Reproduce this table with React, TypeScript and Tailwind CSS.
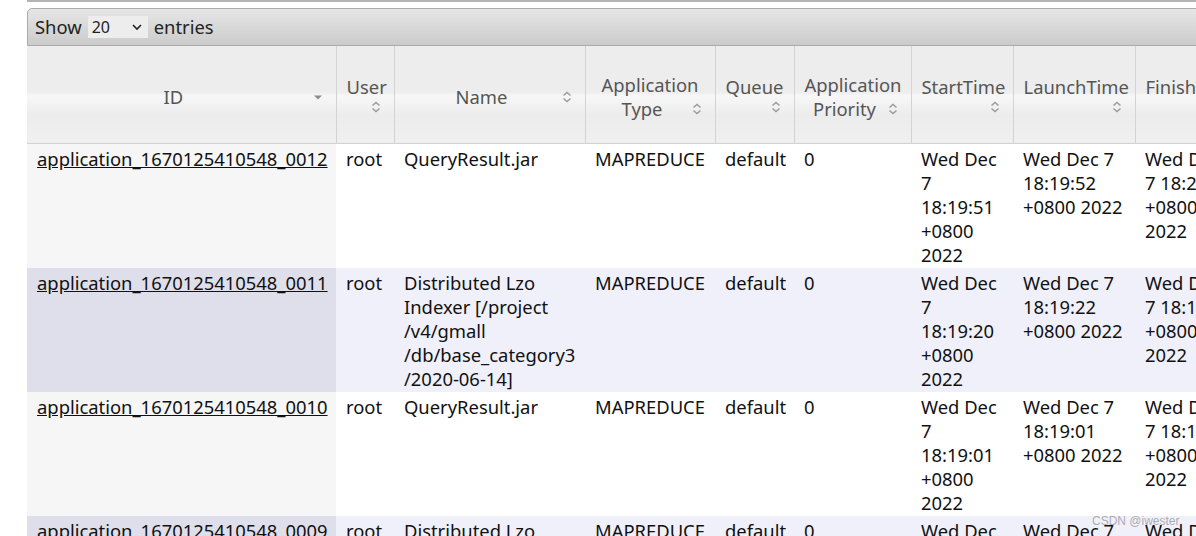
import type { ReactNode } from 'react';

type Col = { key: string; label: string[]; width: number; icon: 'tri' | 'chev'; mode: 'inline' | 'below' | 'wrap' };

const COLS: Col[] = [
  { key: 'id', label: ['ID'], width: 309, icon: 'tri', mode: 'inline' },
  { key: 'user', label: ['User'], width: 58, icon: 'chev', mode: 'below' },
  { key: 'name', label: ['Name'], width: 191, icon: 'chev', mode: 'inline' },
  { key: 'type', label: ['Application', 'Type'], width: 130, icon: 'chev', mode: 'wrap' },
  { key: 'queue', label: ['Queue'], width: 79, icon: 'chev', mode: 'below' },
  { key: 'prio', label: ['Application', 'Priority'], width: 117, icon: 'chev', mode: 'wrap' },
  { key: 'start', label: ['StartTime'], width: 102, icon: 'chev', mode: 'below' },
  { key: 'launch', label: ['LaunchTime'], width: 122, icon: 'chev', mode: 'below' },
  { key: 'finish', label: ['FinishTime'], width: 112, icon: 'chev', mode: 'below' },
];

type Row = {
  id: string;
  name: string[];
  start: string[];
  launch: string[];
  finish: string[];
};

const ROWS: Row[] = [
  {
    id: 'application_1670125410548_0012',
    name: ['QueryResult.jar'],
    start: ['Wed Dec', '7', '18:19:51', '+0800', '2022'],
    launch: ['Wed Dec 7', '18:19:52', '+0800 2022'],
    finish: ['Wed Dec', '7 18:20:03', '+0800', '2022'],
  },
  {
    id: 'application_1670125410548_0011',
    name: ['Distributed Lzo', 'Indexer [/project', '/v4/gmall', '/db/base_category3', '/2020-06-14]'],
    start: ['Wed Dec', '7', '18:19:20', '+0800', '2022'],
    launch: ['Wed Dec 7', '18:19:22', '+0800 2022'],
    finish: ['Wed Dec', '7 18:19:38', '+0800', '2022'],
  },
  {
    id: 'application_1670125410548_0010',
    name: ['QueryResult.jar'],
    start: ['Wed Dec', '7', '18:19:01', '+0800', '2022'],
    launch: ['Wed Dec 7', '18:19:01', '+0800 2022'],
    finish: ['Wed Dec', '7 18:19:12', '+0800', '2022'],
  },
  {
    id: 'application_1670125410548_0009',
    name: ['Distributed Lzo', 'Indexer [/project', '/v4/gmall', '/db/base_category2', '/2020-06-14]'],
    start: ['Wed Dec', '7', '18:18:30', '+0800', '2022'],
    launch: ['Wed Dec 7', '18:18:31', '+0800 2022'],
    finish: ['Wed Dec', '7 18:18:47', '+0800', '2022'],
  },
];

function SortIcon({ kind }: { kind: 'tri' | 'chev' }) {
  if (kind === 'tri') {
    return (
      <svg width="16" height="16" viewBox="0 0 16 16" className="shrink-0">
        <path d="M4 6.5 L12 6.5 L8 10.5 Z" fill="#8c8c8c" />
      </svg>
    );
  }
  return (
    <svg width="16" height="16" viewBox="0 0 16 16" className="shrink-0">
      <path d="M4.5 6.5 L8 3.5 L11.5 6.5 M4.5 9.5 L8 12.5 L11.5 9.5" stroke="#9a9a9a" strokeWidth="1.4" fill="none" />
    </svg>
  );
}

function HeadCell({ col }: { col: Col }) {
  let body: ReactNode;
  if (col.mode === 'inline') {
    body = (
      <div className="flex items-center">
        <span className="flex-1 text-center">{col.label[0]}</span>
        <SortIcon kind={col.icon} />
      </div>
    );
  } else if (col.mode === 'below') {
    return (
      <th className="border-r border-[#d3d3d3] px-[10px] pt-[2px] font-normal text-[#555]">
        <div className="text-center whitespace-nowrap">{col.label[0]}</div>
        <div className="flex justify-end">
          <SortIcon kind={col.icon} />
        </div>
      </th>
    );
  } else {
    body = (
      <div>
        <div className="text-center whitespace-nowrap">{col.label[0]}</div>
        <div className="flex items-center">
          <span className="flex-1 text-center">{col.label[1]}</span>
          <SortIcon kind={col.icon} />
        </div>
      </div>
    );
  }
  return <th className="border-r border-[#d3d3d3] px-[10px] pt-[6px] font-normal text-[#555]">{body}</th>;
}

function Lines({ items }: { items: string[] }) {
  return (
    <>
      {items.map((t, i) => (
        <div key={i} className="whitespace-nowrap">
          {t}
        </div>
      ))}
    </>
  );
}

export default function App() {
  return (
    <div className="relative w-[1196px] h-[536px] overflow-hidden bg-white font-['Noto_Sans',sans-serif] text-[18.4px] leading-6 text-[#111]">
      <div className="ml-[27px] border-t-2 border-[#b4b4b4] pt-[6px]">
        <div className="w-[1220px]">
          {/* toolbar */}
          <div className="flex h-[38px] items-center gap-[6px] rounded-tl-[5px] border border-[#aaa] bg-[linear-gradient(to_bottom,#e6e6e6,#cbcbcb)] pl-[7px] text-[#222]">
            <span>Show</span>
            <div className="flex h-[22px] w-[60px] items-center justify-between bg-[#ededed] pl-[4px] pr-[5px] text-[16px]">
              <span>20</span>
              <svg width="12" height="12" viewBox="0 0 12 12">
                <path d="M2 4 L6 8 L10 4" stroke="#222" strokeWidth="1.6" fill="none" />
              </svg>
            </div>
            <span>entries</span>
          </div>

          <table className="w-[1220px] table-fixed border-collapse">
            <colgroup>
              {COLS.map((c) => (
                <col key={c.key} style={{ width: c.width }} />
              ))}
            </colgroup>
            <thead>
              <tr className="h-[97px] border-b border-[#d3d3d3] bg-[linear-gradient(to_bottom,#ededed_0%,#ededed_48%,#f7f7f7_52%,#ececec_72%,#f0f0f0_100%)]">
                {COLS.map((c) => (
                  <HeadCell key={c.key} col={c} />
                ))}
              </tr>
            </thead>
            <tbody>
              {ROWS.map((r, i) => {
                const even = i % 2 === 1;
                const cell = `align-top px-[10px] pt-[3px] pb-[1px] ${even ? 'bg-[#f0f0fb]' : 'bg-white'}`;
                return (
                  <tr key={r.id}>
                    <td className={`align-top px-[10px] pt-[3px] pb-[1px] ${even ? 'bg-[#dfdfeb]' : 'bg-[#f6f6f6]'}`}>
                      <a className="underline whitespace-nowrap">{r.id}</a>
                    </td>
                    <td className={cell}>root</td>
                    <td className={cell}>
                      <Lines items={r.name} />
                    </td>
                    <td className={cell}>MAPREDUCE</td>
                    <td className={cell}>default</td>
                    <td className={cell}>0</td>
                    <td className={cell}>
                      <Lines items={r.start} />
                    </td>
                    <td className={cell}>
                      <Lines items={r.launch} />
                    </td>
                    <td className={cell}>
                      <Lines items={r.finish} />
                    </td>
                  </tr>
                );
              })}
            </tbody>
          </table>
        </div>
      </div>

      {/* watermark */}
      <div className="absolute left-[1092px] top-[513px] font-['Liberation_Sans',sans-serif] text-[12px] leading-4 text-[#999]/80">
        CSDN @iwester
      </div>
    </div>
  );
}
